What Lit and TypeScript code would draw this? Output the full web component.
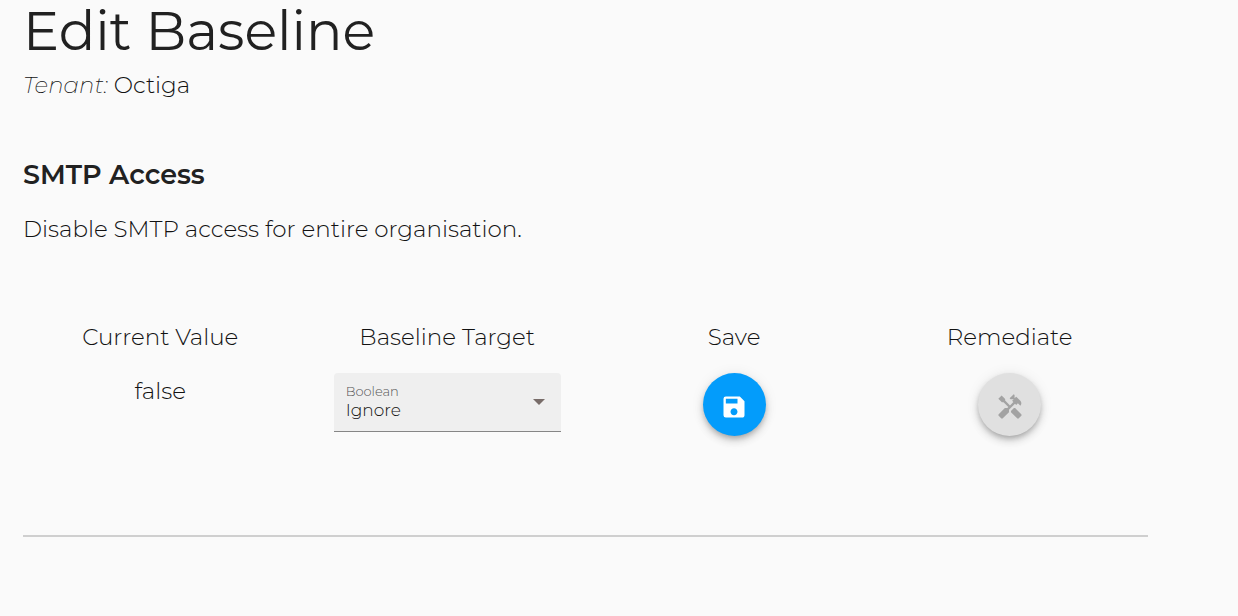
import { LitElement, html, css } from "lit";
import { customElement, state } from "lit/decorators.js";

@customElement("app-root")
export class AppRoot extends LitElement {
  static styles = css`
    :host {
      display: block;
      min-height: 100vh;
      box-sizing: border-box;
      background: #fafafa;
      color: #121212;
      font-family: Montserrat, Inter, "Open Sans", sans-serif;
      font-size: 23px;
      font-weight: 300;
      line-height: 36px;
    }
    main {
      padding: 0 90px 0 23px;
    }
    h1 {
      margin: 0;
      color: #212121;
      font-size: 54px;
      line-height: 62px;
      font-weight: 400;
    }
    .tenant {
      margin: 5px 0 0;
    }
    .tenant em {
      font-weight: 200;
    }
    .tenant span {
      font-weight: 350;
    }
    h2 {
      margin: 54px 0 0;
      color: #212121;
      font-size: 27px;
      line-height: 36px;
      font-weight: 580;
    }
    .description {
      margin: 18px 0 0;
    }
    table {
      width: 100%;
      margin-top: 72px;
      table-layout: fixed;
      border-collapse: collapse;
      text-align: center;
    }
    th {
      padding: 0;
      font-weight: 300;
      width: 24.4%;
    }
    th.wide {
      width: 26.6%;
    }
    th:last-child {
      width: 24.6%;
    }
    td {
      padding: 18px 0 0;
      vertical-align: top;
    }
    .field {
      display: inline-grid;
      width: 227px;
      max-width: 100%;
      height: 59px;
      box-sizing: border-box;
      background: #efefef;
      border-bottom: 1px solid #868686;
      border-radius: 4px 4px 0 0;
      vertical-align: top;
      text-align: left;
    }
    .field > * {
      grid-area: 1 / 1;
    }
    .caption {
      padding: 9px 12px 0;
      font-size: 13px;
      line-height: 18px;
      color: #555;
      pointer-events: none;
      z-index: 1;
    }
    select {
      appearance: none;
      width: 100%;
      height: 100%;
      margin: 0;
      padding: 16px 36px 0 12px;
      border: 0;
      background: transparent;
      color: inherit;
      font: inherit;
      font-size: 17px;
      line-height: 20px;
    }
    .arrow {
      justify-self: end;
      align-self: center;
      width: 12px;
      height: 6px;
      margin-right: 16px;
      fill: #786c69;
      pointer-events: none;
    }
    .fab {
      display: inline-flex;
      align-items: center;
      justify-content: center;
      width: 63px;
      height: 63px;
      padding: 4px 0 0;
      border: 0;
      border-radius: 50%;
      background: #039cfb;
      color: #fff;
      vertical-align: top;
      box-shadow: 0 3px 5px -1px rgba(0, 0, 0, 0.2),
        0 5px 8px rgba(0, 0, 0, 0.14), 0 1px 14px rgba(0, 0, 0, 0.08);
    }
    .fab:disabled {
      background: #e0e0e0;
      color: #a3a3a3;
    }
    .fab svg {
      width: 28px;
      height: 28px;
      fill: currentColor;
    }
    hr {
      margin: 99px 0 0;
      border: 0;
      height: 2px;
      background: #cfcfcf;
    }
  `;

  @state() private target = "Ignore";

  private onChange(e: Event) {
    this.target = (e.target as HTMLSelectElement).value;
  }

  render() {
    return html`
      <main>
        <h1>Edit Baseline</h1>
        <p class="tenant"><em>Tenant:</em> <span>Octiga</span></p>
        <h2>SMTP Access</h2>
        <p class="description">Disable SMTP access for entire organisation.</p>
        <table>
          <thead>
            <tr>
              <th scope="col">Current Value</th>
              <th scope="col" class="wide">Baseline Target</th>
              <th scope="col">Save</th>
              <th scope="col">Remediate</th>
            </tr>
          </thead>
          <tbody>
            <tr>
              <td>false</td>
              <td>
                <div class="field">
                  <label class="caption" for="target">Boolean</label>
                  <select id="target" .value=${this.target} @change=${this.onChange}>
                    <option>Ignore</option>
                    <option>true</option>
                    <option>false</option>
                  </select>
                  <svg class="arrow" viewBox="0 0 12 6" aria-hidden="true">
                    <path d="M0 0h12L6 6z" />
                  </svg>
                </div>
              </td>
              <td>
                <button class="fab" type="button" aria-label="Save">
                  <svg viewBox="0 0 24 24" aria-hidden="true">
                    <path
                      d="M17 3H5a2 2 0 0 0-2 2v14a2 2 0 0 0 2 2h14c1.100 0 2-.9 2-2V7l-4-4zm-5 16c-1.660 0-3-1.340-3-3s1.340-3 3-3 3 1.340 3 3-1.340 3-3 3zm3-10H5V5h10v4z"
                    />
                  </svg>
                </button>
              </td>
              <td>
                <button class="fab" type="button" aria-label="Remediate" disabled>
                  <svg viewBox="0 0 24 24" aria-hidden="true">
                    <path
                      d="M21.670 18.170l-5.300-5.300h-.990l-2.540 2.540v.990l5.300 5.300c.390.390 1.020.390 1.410 0l2.120-2.120c.390-.380.390-1.020 0-1.410z"
                    />
                    <path
                      d="M17.340 10.190l1.410-1.410 2.120 2.120c1.170-1.170 1.170-3.070 0-4.240l-3.540-3.540-1.410 1.410V1.710L15.220 1l-3.540 3.540.710.710h2.830l-1.410 1.410 1.060 1.060-2.890 2.890-4.130-4.130V5.060L4.830 2.040 2 4.870 5.030 7.900h1.410l4.130 4.130-.850.850H7.600l-5.300 5.300c-.390.390-.390 1.020 0 1.410l2.120 2.120c.390.390 1.020.390 1.410 0l5.300-5.300v-2.120l5.150-5.150 1.050 1.050z"
                    />
                  </svg>
                </button>
              </td>
            </tr>
          </tbody>
        </table>
        <hr />
      </main>
    `;
  }
}
